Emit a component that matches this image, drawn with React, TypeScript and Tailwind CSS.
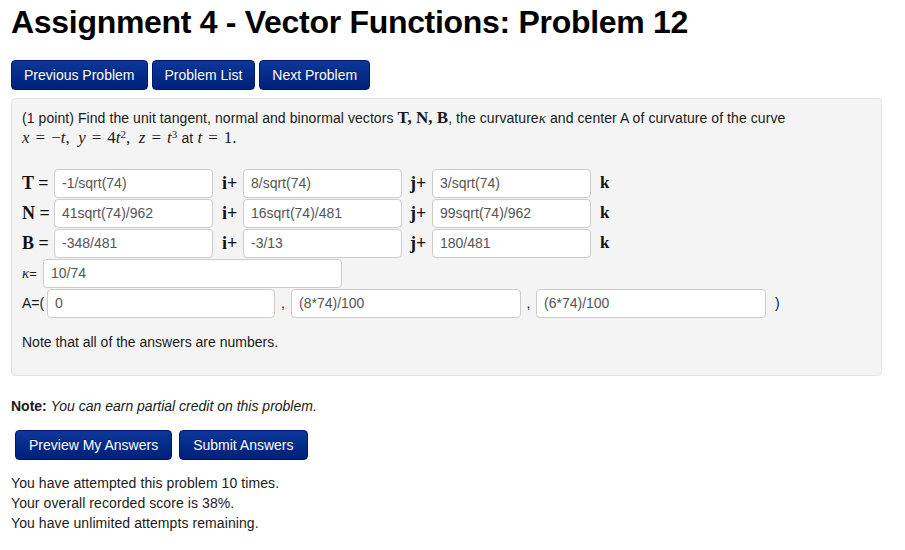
import React from "react"

const sans = { fontFamily: '"Liberation Sans", Arial, sans-serif' }
const serif = { fontFamily: '"Liberation Serif", "Times New Roman", serif' }

function NavButton({ children, wide }: { children: React.ReactNode; wide?: boolean }) {
  return (
    <button
      className={`h-[30px] rounded-[4px] border border-[#00186a] bg-gradient-to-b from-[#0c3799] to-[#00207a] ${
        wide ? "px-[13px]" : "px-[12px]"
      } text-[14px] text-white [text-shadow:0_-1px_0_rgba(0,0,0,0.3)]`}
    >
      {children}
    </button>
  )
}

function Field({ value, w }: { value: string; w: string }) {
  return (
    <input
      readOnly
      value={value}
      className={`h-[29px] ${w} rounded-[4px] border border-[#cccccc] bg-white px-[7px] text-[14px] text-[#555] outline-none`}
    />
  )
}

function VecRow({ label, vals }: { label: string; vals: string[] }) {
  return (
    <div className="flex h-[30px] items-center">
      <span className="w-[32px] font-bold text-[18px] text-[#111]" style={serif}>
        {label} =
      </span>
      <Field value={vals[0]} w="w-[159px]" />
      <span className="w-[30px] pl-[9px] font-bold text-[18px] text-[#111]" style={serif}>
        i+
      </span>
      <Field value={vals[1]} w="w-[159px]" />
      <span className="w-[30px] pl-[8px] font-bold text-[18px] text-[#111]" style={serif}>
        j+
      </span>
      <Field value={vals[2]} w="w-[159px]" />
      <span className="pl-[9px] font-bold text-[17px] text-[#111]" style={serif}>
        k
      </span>
    </div>
  )
}

function Eq() {
  return <span className="mx-[6px]">=</span>
}

export default function App() {
  return (
    <div className="min-h-screen bg-white px-[11px] text-[14px] leading-[20px] text-[#1a1a1a]" style={sans}>
      <h1 className="pt-[4px] text-[32px] font-bold leading-[36px] tracking-[-0.3px] text-black">
        Assignment 4 - Vector Functions: Problem 12
      </h1>

      <div className="mt-[20px] flex gap-[4px]">
        <NavButton>Previous Problem</NavButton>
        <NavButton>Problem List</NavButton>
        <NavButton>Next Problem</NavButton>
      </div>

      <div className="mt-[8px] w-[871px] rounded-[4px] border border-[#e3e3e3] bg-[#f4f4f4] px-[10px] pt-[9px] pb-[23px]">
        <p className="tracking-[0.07px]">
          (1 point) Find the unit tangent, normal and binormal vectors{" "}
          <b className="text-[17px] tracking-normal" style={serif}>T, N, B</b>, the curvature
          <i style={serif} className="text-[15px]">κ</i> and center A of curvature of the curve
        </p>
        <p style={serif} className="text-[17px] leading-[20px]">
          <i>x</i>
          <Eq />−<i>t</i>,&nbsp;&nbsp;<i>y</i>
          <Eq />4<i>t</i>
          <sup className="text-[11px]">2</sup>,&nbsp;&nbsp;<i>z</i>
          <Eq />
          <i>t</i>
          <sup className="text-[11px]">3</sup>{" "}
          <span style={sans} className="text-[14px]">at</span> <i>t</i>
          <Eq />1.
        </p>

        <div className="mt-[20px]">
          <VecRow label="T" vals={["-1/sqrt(74)", "8/sqrt(74)", "3/sqrt(74)"]} />
          <VecRow label="N" vals={["41sqrt(74)/962", "16sqrt(74)/481", "99sqrt(74)/962"]} />
          <VecRow label="B" vals={["-348/481", "-3/13", "180/481"]} />
          <div className="flex h-[30px] items-center">
            <span className="w-[21px] text-[13px]">
              <i style={serif} className="text-[15px]">κ</i>=
            </span>
            <Field value="10/74" w="w-[299px]" />
          </div>
          <div className="flex h-[30px] items-center">
            <span className="w-[25px]">A=(</span>
            <Field value="0" w="w-[228px]" />
            <span className="w-[16px] text-center">,</span>
            <Field value="(8*74)/100" w="w-[230px]" />
            <span className="w-[15px] text-center">,</span>
            <Field value="(6*74)/100" w="w-[230px]" />
            <span className="pl-[9px]">)</span>
          </div>
        </div>

        <p className="mt-[14px]">Note that all of the answers are numbers.</p>
      </div>

      <p className="mt-[20px]">
        <b>Note:</b> <i>You can earn partial credit on this problem.</i>
      </p>

      <div className="mt-[14px] ml-[4px] flex gap-[7px]">
        <NavButton wide>Preview My Answers</NavButton>
        <NavButton wide>Submit Answers</NavButton>
      </div>

      <div className="mt-[13px] tracking-[0.08px]">
        <p>You have attempted this problem 10 times.</p>
        <p>Your overall recorded score is 38%.</p>
        <p>You have unlimited attempts remaining.</p>
      </div>
    </div>
  )
}
